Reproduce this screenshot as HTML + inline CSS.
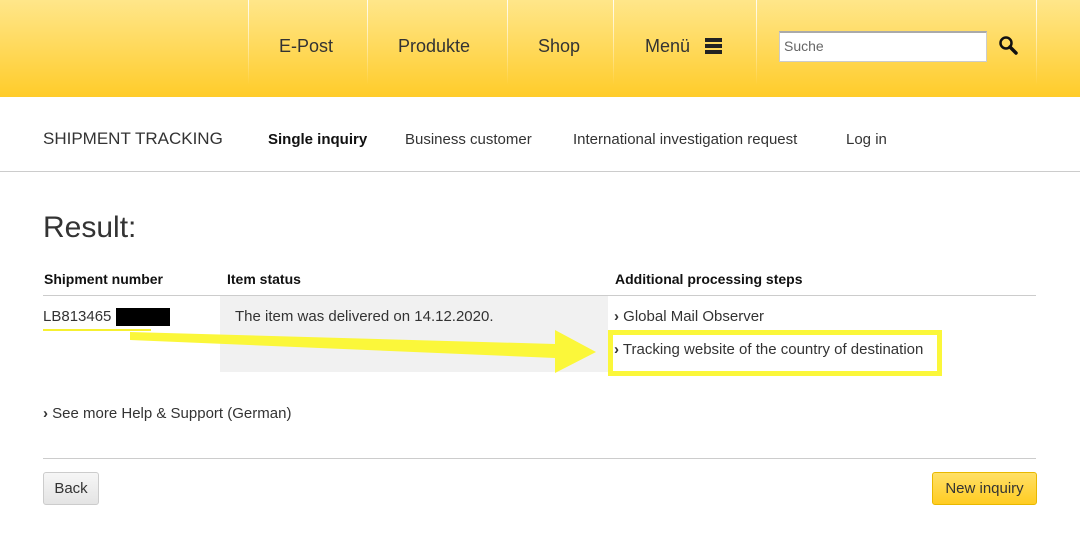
<!DOCTYPE html>
<html><head><meta charset="utf-8"><style>
body{margin:0;width:1080px;height:547px;overflow:hidden;background:#fff;font-family:"Liberation Sans","DejaVu Sans",sans-serif;color:#333;position:relative}
.hd{position:absolute;left:0;top:0;width:1080px;height:97px;background:linear-gradient(#ffe68a,#ffcc2a)}
.vl{position:absolute;top:0;height:85px;width:1px;background:linear-gradient(rgba(255,255,255,.9),rgba(255,255,255,0))}
.nav{position:absolute;top:36px;font-size:18px;color:#333}
.t{position:absolute;white-space:nowrap}
</style></head><body>
<div class="hd"></div>
<div class="vl" style="left:248px"></div><div class="vl" style="left:367px"></div><div class="vl" style="left:507px"></div><div class="vl" style="left:613px"></div><div class="vl" style="left:756px"></div><div class="vl" style="left:1036px"></div>
<div class="nav" style="left:279px">E-Post</div>
<div class="nav" style="left:398px">Produkte</div>
<div class="nav" style="left:538px">Shop</div>
<div class="nav" style="left:645px">Menü</div>
<div style="position:absolute;left:705px;top:38px;width:17px;height:16px;background:repeating-linear-gradient(#222 0 4px,transparent 4px 6px)"></div>
<div style="position:absolute;left:779px;top:31px;width:206px;height:28px;background:#fff;border:1px solid #ccc;border-top:2px solid #aaa"></div>
<div class="t" style="left:784px;top:38px;font-size:14px;color:#666">Suche</div>
<svg style="position:absolute;left:998px;top:35px" width="22" height="22"><circle cx="8" cy="8" r="5.5" fill="none" stroke="#111" stroke-width="2.5"/><line x1="12" y1="12" x2="18" y2="18" stroke="#111" stroke-width="3.5" stroke-linecap="round"/></svg>
<div class="t" style="left:43px;top:129px;font-size:17px;color:#333">SHIPMENT TRACKING</div>
<div class="t" style="left:268px;top:131px;font-size:15px;font-weight:bold;color:#111">Single inquiry</div>
<div class="t" style="left:405px;top:131px;font-size:15px">Business customer</div>
<div class="t" style="left:573px;top:131px;font-size:15px">International investigation request</div>
<div class="t" style="left:846px;top:131px;font-size:15px">Log in</div>
<div style="position:absolute;left:0;top:171px;width:1080px;height:1px;background:#ccc"></div>
<div class="t" style="left:43px;top:211px;font-size:30px;color:#333">Result:</div>
<div class="t" style="left:44px;top:271px;font-size:14px;font-weight:bold;color:#111">Shipment number</div>
<div class="t" style="left:227px;top:271px;font-size:14px;font-weight:bold;color:#111">Item status</div>
<div class="t" style="left:615px;top:271px;font-size:14px;font-weight:bold;color:#111">Additional processing steps</div>
<div style="position:absolute;left:43px;top:295px;width:993px;height:1px;background:#ccc"></div>
<div style="position:absolute;left:220px;top:296px;width:388px;height:76px;background:#f1f1f1"></div>
<div class="t" style="left:43px;top:308px;font-size:15px">LB813465</div>
<div style="position:absolute;left:116px;top:308px;width:54px;height:18px;background:#000"></div>
<div style="position:absolute;left:43px;top:329px;width:108px;height:2px;background:#f6f030"></div>
<div class="t" style="left:235px;top:308px;font-size:15px">The item was delivered on 14.12.2020.</div>
<div class="t" style="left:614px;top:308px;font-size:15px"><b>›</b> Global Mail Observer</div>
<div style="position:absolute;left:608px;top:330px;width:324px;height:36px;border:5px solid #fbf73a"></div>
<div class="t" style="left:614px;top:341px;font-size:15px"><b>›</b> Tracking website of the country of destination</div>
<svg style="position:absolute;left:0;top:0" width="1080" height="547"><polygon points="130,332 555,344 555,330 596,352 555,373 555,358 130,340" fill="#fbf73a"/></svg>
<div class="t" style="left:43px;top:405px;font-size:15px"><b>›</b> See more Help &amp; Support (German)</div>
<div style="position:absolute;left:43px;top:458px;width:993px;height:1px;background:#ccc"></div>
<div style="position:absolute;left:43px;top:472px;width:54px;height:31px;background:linear-gradient(#f6f6f6,#e4e4e4);border:1px solid #ccc;border-radius:3px;font-size:15px;line-height:31px;text-align:center">Back</div>
<div style="position:absolute;left:932px;top:472px;width:103px;height:31px;background:linear-gradient(#ffe066,#ffcc22);border:1px solid #e8b800;border-radius:3px;font-size:15px;line-height:31px;text-align:center">New inquiry</div>
</body></html>
